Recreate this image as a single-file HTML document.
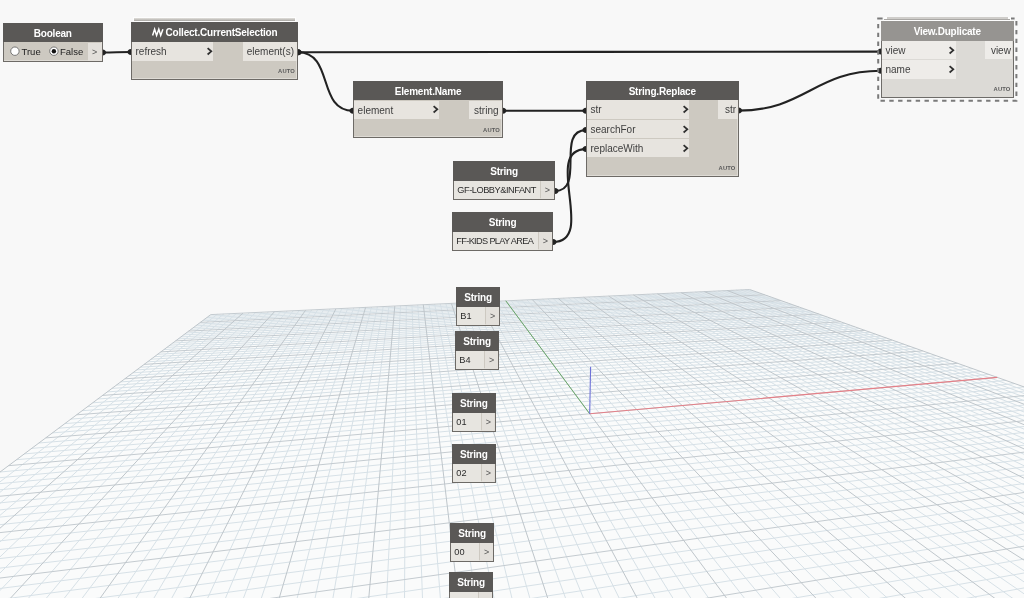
<!DOCTYPE html>
<html><head><meta charset="utf-8">
<style>
html,body{margin:0;padding:0;}
body{width:1024px;height:598px;overflow:hidden;position:relative;background:#f8f8f8;font-family:"Liberation Sans",sans-serif;}
.grid,.wires{position:absolute;left:0;top:0;}
.node{position:absolute;will-change:transform;background:#cdc9c1;box-shadow:inset 0 0 0 1px #6d6a66,inset -2px -2px 0 0 #dedbd5;}
.hd{position:absolute;left:0;right:0;top:0;padding-top:0.6px;box-sizing:border-box;background:#5a5856;color:#fff;font-weight:bold;font-size:10px;letter-spacing:-0.2px;text-align:center;white-space:nowrap;}
.row{position:absolute;background:#e7e4df;font-size:10px;color:#3e3e3e;white-space:nowrap;}
.lbl{position:absolute;top:1px;}
.chev{position:absolute;}
.auto{position:absolute;font-size:5.8px;font-weight:bold;color:#5a5a5a;letter-spacing:0.15px;margin-top:1px;margin-right:-1px;}
.sel .hd{background:#969491;}
.sel{background:#dcdad6;}
.sel .row{background:#eeece9;}
.bar{position:absolute;background:#b9b6b0;}
.tb{position:absolute;background:#e7e5e0;font-size:9.2px;color:#2b2b2b;white-space:nowrap;}
.btn{position:absolute;background:#e3e0db;font-size:9px;color:#555;text-align:center;}
</style></head><body>
<svg class="grid" width="1024" height="598" viewBox="0 0 1024 598">
<path d="M210.8 314.6L212.4 314.5L214.0 314.4L215.7 314.3L217.3 314.3L218.9 314.2L220.5 314.1L222.2 314.0L223.8 314.0L225.4 313.9L227.0 313.8L228.6 313.7L230.3 313.7L231.9 313.6L233.5 313.5L235.1 313.4L236.7 313.4L238.3 313.3L239.9 313.2L241.5 313.1L243.1 313.1L244.7 313.0L246.3 312.9L247.9 312.8L249.5 312.8L251.1 312.7L252.7 312.6L254.3 312.5L255.9 312.5L257.4 312.4L259.0 312.3L260.6 312.3L262.2 312.2L263.8 312.1L265.4 312.0L266.9 312.0L268.5 311.9L270.1 311.8L271.6 311.7L273.2 311.7L274.8 311.6L276.4 311.5L277.9 311.4L279.5 311.4L281.0 311.3L282.6 311.2L284.2 311.2L285.7 311.1L287.3 311.0L288.8 310.9L290.4 310.9L291.9 310.8L293.5 310.7L295.0 310.7L296.6 310.6L298.1 310.5L299.7 310.4L301.2 310.4L302.7 310.3L304.3 310.2L305.8 310.2L307.3 310.1L308.9 310.0L310.4 309.9L311.9 309.9L313.5 309.8L315.0 309.7L316.5 309.7L318.0 309.6L319.6 309.5L321.1 309.4L322.6 309.4L324.1 309.3L325.6 309.2L327.2 309.2L328.7 309.1L330.2 309.0L331.7 308.9L333.2 308.9L334.7 308.8L336.2 308.7L337.7 308.7L339.2 308.6L340.7 308.5L342.2 308.5L343.7 308.4L345.2 308.3L346.7 308.2L348.2 308.2L349.7 308.1L351.2 308.0L352.7 308.0L354.2 307.9L355.6 307.8L357.1 307.8L358.6 307.7L360.1 307.6L361.6 307.6L363.1 307.5L364.5 307.4L366.0 307.4L367.5 307.3L369.0 307.2L370.4 307.1L371.9 307.1L373.4 307.0L374.8 306.9L376.3 306.9L377.8 306.8L379.2 306.7L380.7 306.7L382.1 306.6L383.6 306.5L385.1 306.5L386.5 306.4L388.0 306.3L389.4 306.3L390.9 306.2L392.3 306.1L393.8 306.1L395.2 306.0L396.7 305.9L398.1 305.9L399.5 305.8L401.0 305.7L402.4 305.7L403.9 305.6L405.3 305.5L406.7 305.5L408.2 305.4L409.6 305.3L411.0 305.3L412.5 305.2L413.9 305.1L415.3 305.1L416.7 305.0L418.2 304.9L419.6 304.9L421.0 304.8L422.4 304.7L423.8 304.7L425.3 304.6L426.7 304.5L428.1 304.5L429.5 304.4L430.9 304.3L432.3 304.3L433.7 304.2L435.1 304.1L436.5 304.1L438.0 304.0L439.4 303.9L440.8 303.9L442.2 303.8L443.6 303.7L445.0 303.7L446.3 303.6L447.7 303.5L449.1 303.5L450.5 303.4L451.9 303.4L453.3 303.3L454.7 303.2L456.1 303.2L457.5 303.1L458.9 303.0L460.2 303.0L461.6 302.9L463.0 302.8L464.4 302.8L465.8 302.7L467.1 302.6L468.5 302.6L469.9 302.5L471.3 302.5L472.6 302.4L474.0 302.3L475.4 302.3L476.7 302.2L478.1 302.1L479.5 302.1L480.8 302.0L482.2 301.9L483.5 301.9L484.9 301.8L486.3 301.8L487.6 301.7L489.0 301.6L490.3 301.6L491.7 301.5L493.0 301.4L494.4 301.4L495.7 301.3L497.1 301.3L498.4 301.2L499.8 301.1L501.1 301.1L502.5 301.0L503.8 300.9L505.1 300.9L506.5 300.8L507.8 300.8L509.1 300.7L510.5 300.6L511.8 300.6L513.1 300.5L514.5 300.4L515.8 300.4L517.1 300.3L518.5 300.3L519.8 300.2L521.1 300.1L522.4 300.1L523.8 300.0L525.1 300.0L526.4 299.9L527.7 299.8L529.0 299.8L530.3 299.7L531.7 299.6L533.0 299.6L534.3 299.5L535.6 299.5L536.9 299.4L538.2 299.3L539.5 299.3L540.8 299.2L542.1 299.2L543.4 299.1L544.7 299.0L546.0 299.0L547.3 298.9L548.6 298.9L549.9 298.8L551.2 298.7L552.5 298.7L553.8 298.6L555.1 298.6L556.4 298.5L557.7 298.4L559.0 298.4L560.3 298.3L561.6 298.3L562.8 298.2L564.1 298.1L565.4 298.1L566.7 298.0L568.0 298.0L569.3 297.9L570.5 297.8L571.8 297.8L573.1 297.7L574.4 297.7L575.6 297.6L576.9 297.5L578.2 297.5L579.4 297.4L580.7 297.4L582.0 297.3L583.2 297.2L584.5 297.2L585.8 297.1L587.0 297.1L588.3 297.0L589.6 297.0L590.8 296.9L592.1 296.8L593.3 296.8L594.6 296.7L595.8 296.7L597.1 296.6L598.4 296.5L599.6 296.5L600.9 296.4L602.1 296.4L603.4 296.3L604.6 296.3L605.8 296.2L607.1 296.1L608.3 296.1L609.6 296.0L610.8 296.0L612.1 295.9L613.3 295.8L614.5 295.8L615.8 295.7L617.0 295.7L618.2 295.6L619.5 295.6L620.7 295.5L621.9 295.4L623.2 295.4L624.4 295.3L625.6 295.3L626.8 295.2L628.1 295.2L629.3 295.1L630.5 295.0L631.7 295.0L633.0 294.9L634.2 294.9L635.4 294.8L636.6 294.8L637.8 294.7L639.0 294.6L640.3 294.6L641.5 294.5L642.7 294.5L643.9 294.4L645.1 294.4L646.3 294.3L647.5 294.3L648.7 294.2L649.9 294.1L651.1 294.1L652.3 294.0L653.5 294.0L654.7 293.9L655.9 293.9L657.1 293.8L658.3 293.8L659.5 293.7L660.7 293.6L661.9 293.6L663.1 293.5L664.3 293.5L665.5 293.4L666.7 293.4L667.9 293.3L669.1 293.3L670.3 293.2L671.4 293.1L672.6 293.1L673.8 293.0L675.0 293.0L676.2 292.9L677.4 292.9L678.5 292.8L679.7 292.8L680.9 292.7L682.1 292.6L683.2 292.6L684.4 292.5L685.6 292.5L686.8 292.4L687.9 292.4L689.1 292.3L690.3 292.3L691.4 292.2L692.6 292.2L693.8 292.1L694.9 292.0L696.1 292.0L697.3 291.9L698.4 291.9L699.6 291.8L700.8 291.8L701.9 291.7L703.1 291.7L704.2 291.6L705.4 291.6L706.5 291.5L707.7 291.5L708.8 291.4L710.0 291.3L711.1 291.3L712.3 291.2L713.4 291.2L714.6 291.1L715.7 291.1L716.9 291.0L718.0 291.0L719.2 290.9L720.3 290.9L721.5 290.8L722.6 290.8L723.7 290.7L724.9 290.7L726.0 290.6L727.2 290.5L728.3 290.5L729.4 290.4L730.6 290.4L731.7 290.3L732.8 290.3L734.0 290.2L735.1 290.2L736.2 290.1L737.3 290.1L738.5 290.0L739.6 290.0L740.7 289.9L741.8 289.9L743.0 289.8L744.1 289.8L745.2 289.7L746.3 289.7L747.4 289.6L748.6 289.6L749.7 289.5L749.7 289.5L750.4 289.8L751.1 290.0L751.9 290.3L752.6 290.5L753.3 290.8L754.1 291.1L754.8 291.3L755.5 291.6L756.3 291.8L757.0 292.1L757.8 292.4L758.5 292.6L759.3 292.9L760.1 293.2L760.8 293.5L761.6 293.7L762.4 294.0L763.2 294.3L763.9 294.6L764.7 294.8L765.5 295.1L766.3 295.4L767.1 295.7L767.9 296.0L768.7 296.2L769.5 296.5L770.3 296.8L771.1 297.1L771.9 297.4L772.7 297.7L773.6 298.0L774.4 298.3L775.2 298.6L776.1 298.9L776.9 299.2L777.7 299.5L778.6 299.8L779.4 300.1L780.3 300.4L781.1 300.7L782.0 301.0L782.9 301.3L783.7 301.6L784.6 301.9L785.5 302.2L786.4 302.5L787.2 302.8L788.1 303.2L789.0 303.5L789.9 303.8L790.8 304.1L791.7 304.4L792.6 304.8L793.6 305.1L794.5 305.4L795.4 305.7L796.3 306.1L797.3 306.4L798.2 306.7L799.1 307.1L800.1 307.4L801.0 307.7L802.0 308.1L802.9 308.4L803.9 308.8L804.9 309.1L805.9 309.4L806.8 309.8L807.8 310.1L808.8 310.5L809.8 310.8L810.8 311.2L811.8 311.6L812.8 311.9L813.8 312.3L814.8 312.6L815.9 313.0L816.9 313.4L817.9 313.7L819.0 314.1L820.0 314.5L821.0 314.8L822.1 315.2L823.2 315.6L824.2 316.0L825.3 316.3L826.4 316.7L827.5 317.1L828.5 317.5L829.6 317.9L830.7 318.3L831.8 318.7L833.0 319.1L834.1 319.5L835.2 319.9L836.3 320.3L837.5 320.7L838.6 321.1L839.7 321.5L840.9 321.9L842.0 322.3L843.2 322.7L844.4 323.1L845.6 323.5L846.7 324.0L847.9 324.4L849.1 324.8L850.3 325.2L851.5 325.7L852.8 326.1L854.0 326.5L855.2 327.0L856.4 327.4L857.7 327.8L858.9 328.3L860.2 328.7L861.5 329.2L862.7 329.6L864.0 330.1L865.3 330.5L866.6 331.0L867.9 331.5L869.2 331.9L870.5 332.4L871.8 332.9L873.1 333.3L874.5 333.8L875.8 334.3L877.2 334.8L878.5 335.2L879.9 335.7L881.3 336.2L882.7 336.7L884.1 337.2L885.5 337.7L886.9 338.2L888.3 338.7L889.7 339.2L891.1 339.7L892.6 340.2L894.0 340.7L895.5 341.3L897.0 341.8L898.4 342.3L899.9 342.8L901.4 343.4L902.9 343.9L904.4 344.4L906.0 345.0L907.5 345.5L909.0 346.1L910.6 346.6L912.2 347.2L913.7 347.7L915.3 348.3L916.9 348.9L918.5 349.4L920.1 350.0L921.7 350.6L923.4 351.2L925.0 351.7L926.6 352.3L928.3 352.9L930.0 353.5L931.7 354.1L933.4 354.7L935.1 355.3L936.8 355.9L938.5 356.5L940.2 357.2L942.0 357.8L943.8 358.4L945.5 359.0L947.3 359.7L949.1 360.3L950.9 360.9L952.7 361.6L954.6 362.2L956.4 362.9L958.3 363.6L960.2 364.2L962.0 364.9L963.9 365.6L965.8 366.2L967.8 366.9L969.7 367.6L971.7 368.3L973.6 369.0L975.6 369.7L977.6 370.4L979.6 371.1L981.6 371.8L983.6 372.6L985.7 373.3L987.7 374.0L989.8 374.7L991.9 375.5L994.0 376.2L996.1 377.0L998.3 377.8L1000.4 378.5L1002.6 379.3L1004.8 380.1L1007.0 380.8L1009.2 381.6L1011.4 382.4L1013.7 383.2L1016.0 384.0L1018.2 384.8L1020.5 385.7L1022.9 386.5L1025.2 387.3L1027.6 388.1L1029.9 389.0L1032.3 389.8L1034.7 390.7L1037.1 391.5L1039.6 392.4L1042.1 393.3L1044.5 394.2L1047.0 395.1L1049.6 396.0L1052.1 396.9L1054.7 397.8L1057.3 398.7L1059.9 399.6L1062.5 400.5L1065.1 401.5L1067.8 402.4L1070.5 403.4L1073.2 404.3L1074.0 405.3L1074.0 406.3L1074.0 407.3L1074.0 408.3L1074.0 409.3L1074.0 410.3L1074.0 411.3L1074.0 412.3L1074.0 413.4L1074.0 414.4L1074.0 415.5L1074.0 416.5L1074.0 417.6L1074.0 418.7L1074.0 419.8L1074.0 420.9L1074.0 422.0L1074.0 423.1L1074.0 424.3L1074.0 425.4L1074.0 426.6L1074.0 427.7L1074.0 428.9L1074.0 430.1L1074.0 431.3L1074.0 432.5L1074.0 433.7L1074.0 434.9L1074.0 436.2L1074.0 437.4L1074.0 438.7L1074.0 439.9L1074.0 441.2L1074.0 442.5L1074.0 443.8L1074.0 445.2L1074.0 446.5L1074.0 447.8L1074.0 449.2L1074.0 450.6L1074.0 452.0L1074.0 453.4L1074.0 454.8L1074.0 456.2L1074.0 457.7L1074.0 459.1L1074.0 460.6L1074.0 462.1L1074.0 463.6L1074.0 465.1L1074.0 466.6L1074.0 468.2L1074.0 469.8L1074.0 471.3L1074.0 472.9L1074.0 474.6L1074.0 476.2L1074.0 477.8L1074.0 479.5L1074.0 481.2L1074.0 482.9L1074.0 484.6L1074.0 486.4L1074.0 488.1L1074.0 489.9L1074.0 491.7L1074.0 493.5L1074.0 495.4L1074.0 497.3L1074.0 499.1L1074.0 501.1L1074.0 503.0L1074.0 504.9L1074.0 506.9L1074.0 508.9L1074.0 510.9L1074.0 513.0L1074.0 515.0L1074.0 517.1L1074.0 519.3L1074.0 521.4L1074.0 523.6L1074.0 525.8L1074.0 528.0L1074.0 530.3L1074.0 532.6L1074.0 534.9L1074.0 537.2L1074.0 539.6L1074.0 542.0L1074.0 544.4L1074.0 546.9L1074.0 549.4L1074.0 551.9L1074.0 554.5L1074.0 557.1L1074.0 559.7L1074.0 562.4L1074.0 565.1L1074.0 567.9L1074.0 570.6L1074.0 573.5L1074.0 576.3L1074.0 579.2L1074.0 582.2L1074.0 585.2L1074.0 588.2L1074.0 591.3L1074.0 594.4L1074.0 597.6L1074.0 600.8L1074.0 604.1L1074.0 607.4L1074.0 610.7L1074.0 614.2L1074.0 617.6L1074.0 621.1L1074.0 624.7L1074.0 628.4L1074.0 632.1L1074.0 635.8L1074.0 639.6L1074.0 643.5L1074.0 647.4L1074.0 648.0L1074.0 648.0L1074.0 648.0L1074.0 648.0L1074.0 648.0L1074.0 648.0L1074.0 648.0L1074.0 648.0L1074.0 648.0L1074.0 648.0L1074.0 648.0L1074.0 648.0L1074.0 648.0L1074.0 648.0L1074.0 648.0L1074.0 648.0L1074.0 648.0L1074.0 648.0L1074.0 648.0L1074.0 648.0L1074.0 648.0L1074.0 648.0L1074.0 648.0L1074.0 648.0L1074.0 648.0L1074.0 648.0L1074.0 648.0L1074.0 648.0L1074.0 648.0L1074.0 648.0L1074.0 648.0L1074.0 648.0L1074.0 648.0L1074.0 648.0L1074.0 648.0L1074.0 648.0L1074.0 648.0L1074.0 648.0L1074.0 648.0L1074.0 648.0L1074.0 648.0L1074.0 648.0L1074.0 648.0L1074.0 648.0L1074.0 648.0L1074.0 648.0L1074.0 648.0L1074.0 648.0L1074.0 648.0L1074.0 648.0L1074.0 648.0L1074.0 648.0L1074.0 648.0L1074.0 648.0L1074.0 648.0L1074.0 648.0L1074.0 648.0L1074.0 648.0L1074.0 648.0L1074.0 648.0L1074.0 648.0L1074.0 648.0L1074.0 648.0L1074.0 648.0L1074.0 648.0L1074.0 648.0L1074.0 648.0L1074.0 648.0L1074.0 648.0L1074.0 648.0L1074.0 648.0L1074.0 648.0L1074.0 648.0L1074.0 648.0L1074.0 648.0L1074.0 648.0L1074.0 648.0L1074.0 648.0L1074.0 648.0L1074.0 648.0L1074.0 648.0L1074.0 648.0L1074.0 648.0L1074.0 648.0L1074.0 648.0L1074.0 648.0L1074.0 648.0L1074.0 648.0L1074.0 648.0L1074.0 648.0L1074.0 648.0L1074.0 648.0L1074.0 648.0L1074.0 648.0L1074.0 648.0L1074.0 648.0L1074.0 648.0L1074.0 648.0L1074.0 648.0L1074.0 648.0L1074.0 648.0L1074.0 648.0L1074.0 648.0L1074.0 648.0L1074.0 648.0L1074.0 648.0L1074.0 648.0L1074.0 648.0L1074.0 648.0L1074.0 648.0L1074.0 648.0L1074.0 648.0L1074.0 648.0L1074.0 648.0L1074.0 648.0L1074.0 648.0L1074.0 648.0L1074.0 648.0L1074.0 648.0L1074.0 648.0L1074.0 648.0L1074.0 648.0L1074.0 648.0L1074.0 648.0L1074.0 648.0L1074.0 648.0L1074.0 648.0L1074.0 648.0L1074.0 648.0L1074.0 648.0L1074.0 648.0L1074.0 648.0L1074.0 648.0L1074.0 648.0L1074.0 648.0L1074.0 648.0L1074.0 648.0L1074.0 648.0L1074.0 648.0L1074.0 648.0L1074.0 648.0L1074.0 648.0L1074.0 648.0L1074.0 648.0L1074.0 648.0L1074.0 648.0L1074.0 648.0L1074.0 648.0L1074.0 648.0L1074.0 648.0L1074.0 648.0L1074.0 648.0L1074.0 648.0L1074.0 648.0L1074.0 648.0L1074.0 648.0L1074.0 648.0L1074.0 648.0L1074.0 648.0L1074.0 648.0L1074.0 648.0L1074.0 648.0L1074.0 648.0L1074.0 648.0L1074.0 648.0L1074.0 648.0L1074.0 648.0L1074.0 648.0L1074.0 648.0L1074.0 648.0L1074.0 648.0L1074.0 648.0L1074.0 648.0L1074.0 648.0L1074.0 648.0L1074.0 648.0L1074.0 648.0L1074.0 648.0L1074.0 648.0L1074.0 648.0L1074.0 648.0L1074.0 648.0L1074.0 648.0L1074.0 648.0L1074.0 648.0L1074.0 648.0L1074.0 648.0L1074.0 648.0L1074.0 648.0L1074.0 648.0L1074.0 648.0L1074.0 648.0L1074.0 648.0L1074.0 648.0L1074.0 648.0L1074.0 648.0L1074.0 648.0L1074.0 648.0L1074.0 648.0L1074.0 648.0L1074.0 648.0L1074.0 648.0L1074.0 648.0L1074.0 648.0L1074.0 648.0L1074.0 648.0L1074.0 648.0L1074.0 648.0L1074.0 648.0L1074.0 648.0L1074.0 648.0L1074.0 648.0L1074.0 648.0L1074.0 648.0L1074.0 648.0L1074.0 648.0L1074.0 648.0L1074.0 648.0L1074.0 648.0L1074.0 648.0L1074.0 648.0L1074.0 648.0L1074.0 648.0L1074.0 648.0L1074.0 648.0L1074.0 648.0L1074.0 648.0L1074.0 648.0L1074.0 648.0L1074.0 648.0L1074.0 648.0L1074.0 648.0L1074.0 648.0L1074.0 648.0L1074.0 648.0L1074.0 648.0L1074.0 648.0L1074.0 648.0L1074.0 648.0L1074.0 648.0L1074.0 648.0L1074.0 648.0L1074.0 648.0L1074.0 648.0L1074.0 648.0L1074.0 648.0L1074.0 648.0L1074.0 648.0L1074.0 648.0L1074.0 648.0L1074.0 648.0L1074.0 648.0L1074.0 648.0L1074.0 648.0L1074.0 648.0L1074.0 648.0L1074.0 648.0L1074.0 648.0L1074.0 648.0L1074.0 648.0L1074.0 648.0L1074.0 648.0L1074.0 648.0L1074.0 648.0L1074.0 648.0L1074.0 648.0L1074.0 648.0L1074.0 648.0L1074.0 648.0L1074.0 648.0L1074.0 648.0L1074.0 648.0L1074.0 648.0L1074.0 648.0L1074.0 648.0L1074.0 648.0L1074.0 648.0L1074.0 648.0L1074.0 648.0L1074.0 648.0L1074.0 648.0L1074.0 648.0L1074.0 648.0L1074.0 648.0L1074.0 648.0L1074.0 648.0L1057.8 648.0L1040.1 648.0L1022.1 648.0L1003.9 648.0L985.3 648.0L966.4 648.0L947.3 648.0L927.8 648.0L907.9 648.0L887.8 648.0L867.3 648.0L846.5 648.0L825.3 648.0L803.7 648.0L781.8 648.0L759.5 648.0L736.8 648.0L713.7 648.0L690.1 648.0L666.1 648.0L641.7 648.0L616.9 648.0L591.5 648.0L565.7 648.0L539.4 648.0L512.6 648.0L485.3 648.0L457.4 648.0L429.0 648.0L400.0 648.0L370.4 648.0L340.2 648.0L309.4 648.0L278.0 648.0L245.8 648.0L213.0 648.0L179.5 648.0L145.3 648.0L110.3 648.0L74.5 648.0L37.9 648.0L0.5 648.0L-37.8 648.0L-50.0 648.0L-50.0 648.0L-50.0 648.0L-50.0 648.0L-50.0 648.0L-50.0 648.0L-50.0 648.0L-50.0 648.0L-50.0 648.0L-50.0 648.0L-50.0 648.0L-50.0 648.0L-50.0 648.0L-50.0 648.0L-50.0 648.0L-50.0 648.0L-50.0 648.0L-50.0 648.0L-50.0 648.0L-50.0 648.0L-50.0 648.0L-50.0 648.0L-50.0 648.0L-50.0 648.0L-50.0 648.0L-50.0 648.0L-50.0 648.0L-50.0 648.0L-50.0 648.0L-50.0 648.0L-50.0 648.0L-50.0 648.0L-50.0 648.0L-50.0 648.0L-50.0 648.0L-50.0 648.0L-50.0 648.0L-50.0 648.0L-50.0 648.0L-50.0 648.0L-50.0 648.0L-50.0 648.0L-50.0 648.0L-50.0 648.0L-50.0 648.0L-50.0 648.0L-50.0 648.0L-50.0 648.0L-50.0 648.0L-50.0 648.0L-50.0 648.0L-50.0 648.0L-50.0 648.0L-50.0 648.0L-50.0 648.0L-50.0 648.0L-50.0 648.0L-50.0 648.0L-50.0 648.0L-50.0 648.0L-50.0 648.0L-50.0 648.0L-50.0 648.0L-50.0 648.0L-50.0 648.0L-50.0 648.0L-50.0 648.0L-50.0 648.0L-50.0 648.0L-50.0 648.0L-50.0 648.0L-50.0 648.0L-50.0 648.0L-50.0 648.0L-50.0 648.0L-50.0 648.0L-50.0 648.0L-50.0 648.0L-50.0 648.0L-50.0 648.0L-50.0 648.0L-50.0 648.0L-50.0 648.0L-50.0 648.0L-50.0 648.0L-50.0 648.0L-50.0 648.0L-50.0 648.0L-50.0 648.0L-50.0 648.0L-50.0 648.0L-50.0 648.0L-50.0 648.0L-50.0 648.0L-50.0 648.0L-50.0 648.0L-50.0 648.0L-50.0 648.0L-50.0 648.0L-50.0 648.0L-50.0 648.0L-50.0 648.0L-50.0 648.0L-50.0 648.0L-50.0 648.0L-50.0 648.0L-50.0 648.0L-50.0 648.0L-50.0 648.0L-50.0 648.0L-50.0 648.0L-50.0 648.0L-50.0 648.0L-50.0 648.0L-50.0 648.0L-50.0 648.0L-50.0 648.0L-50.0 648.0L-50.0 648.0L-50.0 648.0L-50.0 648.0L-50.0 648.0L-50.0 648.0L-50.0 648.0L-50.0 648.0L-50.0 648.0L-50.0 648.0L-50.0 648.0L-50.0 648.0L-50.0 648.0L-50.0 648.0L-50.0 648.0L-50.0 648.0L-50.0 648.0L-50.0 648.0L-50.0 648.0L-50.0 648.0L-50.0 648.0L-50.0 648.0L-50.0 648.0L-50.0 648.0L-50.0 648.0L-50.0 648.0L-50.0 648.0L-50.0 648.0L-50.0 648.0L-50.0 648.0L-50.0 648.0L-50.0 648.0L-50.0 648.0L-50.0 648.0L-50.0 648.0L-50.0 648.0L-50.0 648.0L-50.0 648.0L-50.0 648.0L-50.0 648.0L-50.0 648.0L-50.0 648.0L-50.0 648.0L-50.0 648.0L-50.0 648.0L-50.0 648.0L-50.0 648.0L-50.0 648.0L-50.0 648.0L-50.0 648.0L-50.0 648.0L-50.0 648.0L-50.0 648.0L-50.0 648.0L-50.0 648.0L-50.0 648.0L-50.0 648.0L-50.0 648.0L-50.0 648.0L-50.0 648.0L-50.0 648.0L-50.0 647.9L-50.0 643.9L-50.0 640.0L-50.0 636.2L-50.0 632.4L-50.0 628.7L-50.0 625.1L-50.0 621.5L-50.0 617.9L-50.0 614.4L-50.0 611.0L-50.0 607.6L-50.0 604.3L-50.0 601.0L-50.0 597.8L-50.0 594.6L-50.0 591.5L-50.0 588.4L-50.0 585.3L-50.0 582.3L-50.0 579.4L-50.0 576.5L-50.0 573.6L-50.0 570.8L-50.0 568.0L-50.0 565.2L-50.0 562.5L-50.0 559.8L-50.0 557.2L-50.0 554.6L-50.0 552.0L-50.0 549.4L-50.0 546.9L-50.0 544.5L-50.0 542.0L-50.0 539.6L-50.0 537.2L-50.0 534.9L-50.0 532.5L-50.0 530.3L-50.0 528.0L-50.0 525.8L-50.0 523.6L-50.0 521.4L-50.0 519.2L-50.0 517.1L-50.0 515.0L-50.0 512.9L-50.0 510.9L-49.2 508.8L-46.5 506.8L-43.9 504.8L-41.3 502.9L-38.7 501.0L-36.1 499.0L-33.6 497.2L-31.1 495.3L-28.6 493.4L-26.2 491.6L-23.7 489.8L-21.3 488.0L-19.0 486.2L-16.6 484.5L-14.3 482.8L-12.0 481.1L-9.8 479.4L-7.5 477.7L-5.3 476.0L-3.1 474.4L-1.0 472.8L1.2 471.2L3.3 469.6L5.4 468.0L7.5 466.5L9.6 464.9L11.6 463.4L13.6 461.9L15.6 460.4L17.6 458.9L19.5 457.5L21.5 456.0L23.4 454.6L25.3 453.2L27.2 451.8L29.0 450.4L30.9 449.0L32.7 447.6L34.5 446.3L36.3 445.0L38.1 443.6L39.8 442.3L41.6 441.0L43.3 439.7L45.0 438.5L46.7 437.2L48.4 435.9L50.0 434.7L51.7 433.5L53.3 432.2L54.9 431.0L56.5 429.8L58.1 428.7L59.7 427.5L61.2 426.3L62.8 425.2L64.3 424.0L65.8 422.9L67.3 421.8L68.8 420.7L70.3 419.6L71.7 418.5L73.2 417.4L74.6 416.3L76.1 415.2L77.5 414.2L78.9 413.1L80.3 412.1L81.6 411.1L83.0 410.0L84.4 409.0L85.7 408.0L87.0 407.0L88.4 406.0L89.7 405.1L91.0 404.1L92.3 403.1L93.5 402.2L94.8 401.2L96.1 400.3L97.3 399.4L98.5 398.4L99.8 397.5L101.0 396.6L102.2 395.7L103.4 394.8L104.6 393.9L105.8 393.0L106.9 392.2L108.1 391.3L109.3 390.4L110.4 389.6L111.5 388.7L112.7 387.9L113.8 387.0L114.9 386.2L116.0 385.4L117.1 384.6L118.2 383.8L119.3 383.0L120.3 382.2L121.4 381.4L122.4 380.6L123.5 379.8L124.5 379.0L125.6 378.2L126.6 377.5L127.6 376.7L128.6 376.0L129.6 375.2L130.6 374.5L131.6 373.7L132.6 373.0L133.5 372.3L134.5 371.6L135.5 370.8L136.4 370.1L137.4 369.4L138.3 368.7L139.2 368.0L140.2 367.3L141.1 366.6L142.0 366.0L142.9 365.3L143.8 364.6L144.7 363.9L145.6 363.3L146.5 362.6L147.3 362.0L148.2 361.3L149.1 360.7L149.9 360.0L150.8 359.4L151.6 358.8L152.5 358.1L153.3 357.5L154.2 356.9L155.0 356.3L155.8 355.6L156.6 355.0L157.4 354.4L158.2 353.8L159.0 353.2L159.8 352.6L160.6 352.0L161.4 351.5L162.2 350.9L163.0 350.3L163.7 349.7L164.5 349.2L165.3 348.6L166.0 348.0L166.8 347.5L167.5 346.9L168.2 346.3L169.0 345.8L169.7 345.3L170.4 344.7L171.2 344.2L171.9 343.6L172.6 343.1L173.3 342.6L174.0 342.0L174.7 341.5L175.4 341.0L176.1 340.5L176.8 340.0L177.5 339.4L178.2 338.9L178.8 338.4L179.5 337.9L180.2 337.4L180.8 336.9L181.5 336.4L182.2 335.9L182.8 335.5L183.5 335.0L184.1 334.5L184.8 334.0L185.4 333.5L186.0 333.1L186.7 332.6L187.3 332.1L187.9 331.7L188.5 331.2L189.2 330.7L189.8 330.3L190.4 329.8L191.0 329.4L191.6 328.9L192.2 328.5L192.8 328.0L193.4 327.6L194.0 327.1L194.6 326.7L195.1 326.3L195.7 325.8L196.3 325.4L196.9 325.0L197.4 324.5L198.0 324.1L198.6 323.7L199.1 323.3L199.7 322.9L200.2 322.4L200.8 322.0L201.4 321.6L201.9 321.2L202.4 320.8L203.0 320.4L203.5 320.0L204.1 319.6L204.6 319.2L205.1 318.8L205.6 318.4L206.2 318.0L206.7 317.6L207.2 317.2L207.7 316.8L208.2 316.5L208.8 316.1L209.3 315.7L209.8 315.3L210.3 314.9L210.8 314.6Z" fill="#fafbfb"/>
<path d="M-20.0 497.3L217.3 314.3M-20.0 508.2L223.8 314.0M-20.0 519.9L230.2 313.7M-20.0 532.4L236.6 313.4M-20.0 560.3L249.4 312.8M-20.0 576.0L255.7 312.5M-20.0 592.9L262.1 312.2M-20.0 611.2L268.4 311.9M11.0 618.0L280.9 311.3M29.7 618.0L287.1 311.0M48.5 618.0L293.3 310.7M67.2 618.0L299.4 310.4M104.7 618.0L311.7 309.9M123.5 618.0L317.8 309.6M142.2 618.0L323.9 309.3M160.9 618.0L329.9 309.0M198.4 618.0L341.9 308.5M949.6 618.0L1044.0 600.1M217.1 618.0L347.9 308.2M858.7 618.0L1044.0 584.3M235.9 618.0L353.8 307.9M767.8 618.0L1044.0 569.5M254.6 618.0L359.7 307.6M676.9 618.0L1044.0 555.7M292.1 618.0L371.5 307.1M495.0 618.0L1044.0 530.9M310.8 618.0L377.4 306.8M404.0 618.0L1044.0 519.6M329.5 618.0L383.2 306.6M313.0 618.0L1044.0 509.0M348.3 618.0L389.0 306.3M221.9 618.0L1044.0 499.1M385.7 618.0L400.5 305.7M39.7 618.0L1044.0 480.8M404.4 618.0L406.3 305.5M-20.0 613.8L1044.0 472.4M423.2 618.0L412.0 305.2M-20.0 602.1L1044.0 464.4M441.9 618.0L417.7 304.9M-20.0 591.0L1044.0 456.9M479.3 618.0L429.0 304.4M-20.0 570.5L1044.0 442.8M498.0 618.0L434.6 304.2M-20.0 560.9L1044.0 436.3M516.8 618.0L440.2 303.9M-20.0 551.8L1044.0 430.1M535.5 618.0L445.8 303.6M-20.0 543.1L1044.0 424.2M572.9 618.0L456.9 303.1M-20.0 526.8L1044.0 413.1M591.6 618.0L462.4 302.9M-20.0 519.2L1044.0 407.9M610.3 618.0L467.9 302.6M-20.0 511.9L1044.0 403.0M629.0 618.0L473.4 302.4M-20.0 504.9L1044.0 398.2M666.5 618.0L484.3 301.8M-20.0 491.7L1033.4 390.2M685.2 618.0L489.7 301.6M-17.7 485.3L1024.0 386.9M703.9 618.0L495.1 301.3M-8.6 478.5L1014.8 383.6M722.6 618.0L500.5 301.1M0.1 472.0L1005.9 380.4M760.0 618.0L511.1 300.6M16.6 459.7L988.8 374.4M778.7 618.0L516.4 300.4M24.3 453.9L980.6 371.5M797.4 618.0L521.7 300.1M31.7 448.4L972.7 368.7M816.1 618.0L527.0 299.9M38.9 443.0L965.0 365.9M853.5 618.0L537.5 299.4M52.4 432.9L950.1 360.7M872.2 618.0L542.7 299.1M58.8 428.2L943.0 358.1M890.9 618.0L547.9 298.9M64.9 423.6L936.1 355.7M909.6 618.0L553.1 298.6M70.9 419.1L929.3 353.3M947.0 618.0L563.3 298.2M82.2 410.7L916.3 348.6M965.7 618.0L568.5 297.9M87.5 406.7L910.0 346.4M984.3 618.0L573.6 297.7M92.7 402.8L903.9 344.2M1003.0 618.0L578.6 297.5M97.8 399.0L897.9 342.1M1040.4 618.0L588.7 297.0M107.3 391.9L886.4 338.0M1044.0 607.6L593.8 296.8M111.9 388.4L880.8 336.1M1044.0 595.3L598.8 296.5M116.4 385.1L875.4 334.1M1044.0 583.7L603.7 296.3M120.7 381.9L870.1 332.2M1044.0 562.4L613.7 295.8M128.9 375.8L859.8 328.6M1044.0 552.5L618.6 295.6M132.8 372.8L854.9 326.8M1044.0 543.1L623.5 295.4M136.7 369.9L850.0 325.1M1044.0 534.1L628.4 295.1M140.4 367.2L845.3 323.4M1044.0 517.5L638.1 294.7M147.6 361.8L836.0 320.2M1044.0 509.7L643.0 294.5M151.0 359.2L831.6 318.6M1044.0 502.2L647.8 294.2M154.3 356.7L827.2 317.0M1044.0 495.1L652.6 294.0M157.6 354.3L822.9 315.5M1044.0 481.7L662.2 293.6M163.9 349.6L814.6 312.6M1044.0 475.4L666.9 293.4M166.9 347.4L810.6 311.1M1044.0 469.4L671.6 293.1M169.8 345.2L806.7 309.7M1044.0 463.6L676.4 292.9M172.7 343.0L802.8 308.4M1044.0 452.6L685.8 292.5M178.3 338.9L795.3 305.7M1044.0 447.4L690.4 292.3M180.9 336.9L791.6 304.4M1044.0 442.5L695.1 292.0M183.5 334.9L788.0 303.1M1044.0 437.6L699.7 291.8M186.1 333.0L784.5 301.9M1044.0 428.5L709.0 291.4M191.0 329.3L777.7 299.4M1044.0 424.1L713.5 291.2M193.4 327.5L774.3 298.3M1044.0 419.9L718.1 291.0M195.8 325.8L771.1 297.1M1044.0 415.9L722.7 290.8M198.0 324.1L767.8 295.9M1044.0 408.1L731.7 290.3M202.5 320.8L761.6 293.7M1044.0 404.4L736.2 290.1M204.6 319.2L758.5 292.6M1044.0 400.8L740.7 289.9M206.7 317.6L755.5 291.6M1044.0 397.4L745.2 289.7M208.8 316.1L752.6 290.5" stroke="#d7e1e7" stroke-width="1" fill="none"/>
<path d="M1040.4 618.0L1044.0 617.3M586.0 618.0L1044.0 542.9M130.8 618.0L1044.0 489.7M-20.0 580.5L1044.0 449.7M-20.0 534.8L1044.0 418.5M-20.0 498.2L1043.2 393.7M8.5 465.7L997.2 377.4M45.8 437.9L957.4 363.3M76.6 414.8L922.7 350.9M102.6 395.4L892.1 340.1M124.8 378.8L864.9 330.4M144.0 364.4L840.6 321.8M160.8 351.9L818.7 314.0M175.5 340.9L799.0 307.0M188.6 331.1L781.1 300.6M200.3 322.4L764.7 294.8M210.8 314.6L749.7 289.5" stroke="#c4cbd0" stroke-width="1" fill="none"/>
<path d="M-20.0 487.0L210.8 314.6M-20.0 545.9L243.0 313.1M-7.8 618.0L274.6 311.6M86.0 618.0L305.6 310.2M179.7 618.0L335.9 308.8M273.3 618.0L365.6 307.4M367.0 618.0L394.8 306.0M460.6 618.0L423.3 304.7M554.2 618.0L451.4 303.4M647.8 618.0L478.8 302.1M741.3 618.0L505.8 300.8M834.8 618.0L532.3 299.6M928.3 618.0L558.2 298.4M1021.7 618.0L583.7 297.2M1044.0 572.8L608.7 296.1M1044.0 525.6L633.3 294.9M1044.0 488.3L657.4 293.8M1044.0 458.0L681.1 292.7M1044.0 433.0L704.3 291.6M1044.0 411.9L727.2 290.5M1044.0 394.0L749.7 289.5" stroke="#bfc6cb" stroke-width="1" fill="none"/>
<path d="M589.7 413.8L997.2 377.4" stroke="#e48088" stroke-width="1.1"/>
<path d="M589.7 413.8L505.8 300.8" stroke="#6aa86a" stroke-width="1"/>
<path d="M589.7 413.8L590.6 366.8" stroke="#6e72d8" stroke-width="1.1"/>
</svg>
<svg class="wires" width="1024" height="598" viewBox="0 0 1024 598" fill="none" stroke="#222" stroke-width="2.1">
<path d="M102.5 52.5C115.3 52.5 118.2 52 131 52"/>
<path d="M102.5 49.5C104.7 49.5 106.1 51.3 106.1 52.5C106.1 53.7 104.7 55.5 102.5 55.5Z" fill="#222" stroke="none"/>
<path d="M131 49C128.8 49 127.4 50.8 127.4 52C127.4 53.2 128.8 55 131 55Z" fill="#222" stroke="none"/>
<path d="M298 52.2C560.4 52.2 618.6 51.6 881 51.6"/>
<path d="M298 49.2C300.2 49.2 301.6 51.0 301.6 52.2C301.6 53.400000000000006 300.2 55.2 298 55.2Z" fill="#222" stroke="none"/>
<path d="M881 48.6C878.8 48.6 877.4 50.4 877.4 51.6C877.4 52.800000000000004 878.8 54.6 881 54.6Z" fill="#222" stroke="none"/>
<path d="M298 52.2C334.2 52.2 316.8 110.8 353 110.8"/>
<path d="M298 49.2C300.2 49.2 301.6 51.0 301.6 52.2C301.6 53.400000000000006 300.2 55.2 298 55.2Z" fill="#222" stroke="none"/>
<path d="M353 107.8C350.8 107.8 349.4 109.6 349.4 110.8C349.4 112.0 350.8 113.8 353 113.8Z" fill="#222" stroke="none"/>
<path d="M502.8 110.8C540.2 110.8 548.6 110.8 586 110.8"/>
<path d="M502.8 107.8C505.0 107.8 506.40000000000003 109.6 506.40000000000003 110.8C506.40000000000003 112.0 505.0 113.8 502.8 113.8Z" fill="#222" stroke="none"/>
<path d="M586 107.8C583.8 107.8 582.4 109.6 582.4 110.8C582.4 112.0 583.8 113.8 586 113.8Z" fill="#222" stroke="none"/>
<path d="M738.5 110.6C805.1 110.6 814.4 70.8 881 70.8"/>
<path d="M738.5 107.6C740.7 107.6 742.1 109.39999999999999 742.1 110.6C742.1 111.8 740.7 113.6 738.5 113.6Z" fill="#222" stroke="none"/>
<path d="M881 67.8C878.8 67.8 877.4 69.6 877.4 70.8C877.4 72.0 878.8 73.8 881 73.8Z" fill="#222" stroke="none"/>
<path d="M555 191C585.8 191 555.2 130.1 586 130.1"/>
<path d="M555 188C557.2 188 558.6 189.8 558.6 191C558.6 192.2 557.2 194 555 194Z" fill="#222" stroke="none"/>
<path d="M586 127.1C583.8 127.1 582.4 128.9 582.4 130.1C582.4 131.29999999999998 583.8 133.1 586 133.1Z" fill="#222" stroke="none"/>
<path d="M553 242C597.4 242 541.6 149.1 586 149.1"/>
<path d="M553 239C555.2 239 556.6 240.8 556.6 242C556.6 243.2 555.2 245 553 245Z" fill="#222" stroke="none"/>
<path d="M586 146.1C583.8 146.1 582.4 147.9 582.4 149.1C582.4 150.29999999999998 583.8 152.1 586 152.1Z" fill="#222" stroke="none"/>
</svg>

<!-- Boolean -->
<div class="node" style="left:3px;top:23px;width:99.5px;height:38.5px;">
  <div class="hd" style="height:19px;line-height:19px;">Boolean</div>
  <div class="row" style="left:1px;top:19.5px;width:84px;height:17.5px;background:#cdc9c1;"></div>
  <div class="btn" style="left:85px;top:19.5px;width:13.5px;height:18px;line-height:18px;">&gt;</div>
  <svg style="position:absolute;left:0;top:19px" width="86" height="19">
    <circle cx="11.9" cy="9.2" r="4.2" fill="#fff" stroke="#5a5a5a" stroke-width="0.8"/>
    <circle cx="50.9" cy="9.2" r="4.2" fill="#fff" stroke="#5a5a5a" stroke-width="0.8"/>
    <circle cx="50.9" cy="9.2" r="2.2" fill="#111"/>
  </svg>
  <div style="position:absolute;left:18.5px;top:19px;line-height:19px;font-size:9.5px;color:#222;">True</div>
  <div style="position:absolute;left:57px;top:19px;line-height:19px;font-size:9.5px;color:#222;">False</div>
</div>

<!-- Collect.CurrentSelection -->
<div class="bar" style="left:133px;top:16.8px;width:163px;height:5px;background:#fdfdfd;"></div>
<div class="bar" style="left:134px;top:17.9px;width:161px;height:2.7px;background:linear-gradient(#e2e0dc,#a8a6a2);"></div>
<div class="node" style="left:131px;top:22px;width:167px;height:57.5px;">
  <div class="hd" style="height:19.7px;line-height:19.7px;padding-left:14px;">Collect.CurrentSelection</div><svg style="position:absolute;left:0;top:0" width="40" height="20"><path d="M21.6 13.4L23.6 7.2L25.6 13.4L27.8 7.2L29.7 13.4L31.9 7.2" stroke="#fff" stroke-width="1.5" fill="none" stroke-linejoin="miter"/></svg>
  <div class="row" style="left:1px;top:20.3px;width:81.2px;height:18.3px;"><span class="lbl" style="left:3.5px;line-height:18.3px;">refresh</span><svg class="chev" style="right:0.2px;top:4.85px" width="7" height="9"><path d="M1.6 1.1L5.3 4.3L1.6 7.5" stroke="#2f2f2f" stroke-width="1.75" fill="none"/></svg></div>
  <div class="row" style="left:111.7px;top:20.3px;width:54.3px;height:18.3px;"><span class="lbl" style="right:3px;line-height:18.3px;">element(s)</span></div>
  <div class="auto" style="right:4px;top:45px;">AUTO</div>
</div>

<!-- Element.Name -->
<div class="node" style="left:353px;top:81px;width:150px;height:57px;">
  <div class="hd" style="height:19.3px;line-height:19.3px;">Element.Name</div>
  <div class="row" style="left:1px;top:19.6px;width:85.3px;height:18.2px;"><span class="lbl" style="left:3.6px;line-height:18.2px;">element</span><svg class="chev" style="right:0.2px;top:4.80px" width="7" height="9"><path d="M1.6 1.1L5.3 4.3L1.6 7.5" stroke="#2f2f2f" stroke-width="1.75" fill="none"/></svg></div>
  <div class="row" style="left:116px;top:19.6px;width:33px;height:18.2px;"><span class="lbl" style="right:3.5px;line-height:18.2px;">string</span></div>
  <div class="auto" style="right:4px;top:45px;">AUTO</div>
</div>

<!-- String.Replace -->
<div class="node" style="left:586px;top:81px;width:152.5px;height:95.5px;">
  <div class="hd" style="height:19.2px;line-height:19.2px;">String.Replace</div>
  <div class="row" style="left:1px;top:19.4px;width:102px;height:18.6px;"><span class="lbl" style="left:3.5px;line-height:18.6px;">str</span><svg class="chev" style="right:0.2px;top:5.00px" width="7" height="9"><path d="M1.6 1.1L5.3 4.3L1.6 7.5" stroke="#2f2f2f" stroke-width="1.75" fill="none"/></svg></div>
  <div class="row" style="left:1px;top:38.6px;width:102px;height:18.6px;"><span class="lbl" style="left:3.5px;line-height:18.6px;">searchFor</span><svg class="chev" style="right:0.2px;top:5.00px" width="7" height="9"><path d="M1.6 1.1L5.3 4.3L1.6 7.5" stroke="#2f2f2f" stroke-width="1.75" fill="none"/></svg></div>
  <div class="row" style="left:1px;top:57.8px;width:102px;height:18.6px;"><span class="lbl" style="left:3.5px;line-height:18.6px;">replaceWith</span><svg class="chev" style="right:0.2px;top:5.00px" width="7" height="9"><path d="M1.6 1.1L5.3 4.3L1.6 7.5" stroke="#2f2f2f" stroke-width="1.75" fill="none"/></svg></div>
  <div class="row" style="left:132px;top:19.4px;width:19.5px;height:18.5px;"><span class="lbl" style="right:1.5px;line-height:18.5px;">str</span></div>
  <div class="auto" style="right:4px;top:83px;">AUTO</div>
</div>

<!-- View.Duplicate (selected) -->
<svg style="position:absolute;left:0;top:0" width="1024" height="120"><path d="M878.2 18.5H1016.4V100.8H878.2Z" fill="none" stroke="#7a7a7a" stroke-width="2" stroke-dasharray="4.4 4.4"/></svg>
<div class="bar" style="left:884px;top:16.5px;width:127px;height:4.5px;background:#fdfdfd;"></div>
<div class="bar" style="left:887px;top:17px;width:121px;height:2px;background:#cfcdca;"></div>
<div class="bar" style="left:884px;top:19px;width:126px;height:1px;background:#aaa8a5;"></div>
<div class="node sel" style="left:881px;top:21px;width:132.5px;height:76.5px;box-shadow:inset 0 0 0 1px #6e6c69;">
  <div class="hd" style="height:19.5px;line-height:19.5px;">View.Duplicate</div>
  <div class="row" style="left:1px;top:19.8px;width:73.5px;height:18.5px;"><span class="lbl" style="left:3.5px;line-height:18.5px;">view</span><svg class="chev" style="right:0.2px;top:4.95px" width="7" height="9"><path d="M1.6 1.1L5.3 4.3L1.6 7.5" stroke="#2f2f2f" stroke-width="1.75" fill="none"/></svg></div>
  <div class="row" style="left:1px;top:39px;width:73.5px;height:18.5px;"><span class="lbl" style="left:3.5px;line-height:18.5px;">name</span><svg class="chev" style="right:0.2px;top:4.95px" width="7" height="9"><path d="M1.6 1.1L5.3 4.3L1.6 7.5" stroke="#2f2f2f" stroke-width="1.75" fill="none"/></svg></div>
  <div class="row" style="left:104px;top:19.8px;width:27.4px;height:18.5px;"><span class="lbl" style="right:1.5px;line-height:18.5px;">view</span></div>
  <div class="auto" style="right:4px;top:64px;">AUTO</div>
</div>

<div class="node" style="left:453px;top:161px;width:102px;height:38.9px;">
  <div class="hd" style="height:19.6px;line-height:19.6px;">String</div>
  <div class="tb" style="left:1px;top:20.2px;width:85.79999999999995px;height:17.6px;line-height:17.6px;"><span style="position:absolute;left:3.3px;top:1.2px;letter-spacing:-0.44px">GF-LOBBY&amp;INFANT</span></div>
  <div class="btn" style="left:87.79999999999995px;top:20.2px;width:13.200000000000045px;height:17.6px;line-height:17.6px;"><span style="position:relative;top:1.3px">&gt;</span></div>
</div>
<div class="node" style="left:452px;top:212px;width:101px;height:38.9px;">
  <div class="hd" style="height:19.6px;line-height:19.6px;">String</div>
  <div class="tb" style="left:1px;top:20.2px;width:85.0px;height:17.6px;line-height:17.6px;"><span style="position:absolute;left:3.3px;top:1.2px;letter-spacing:-0.65px">FF-KIDS PLAY AREA</span></div>
  <div class="btn" style="left:87.0px;top:20.2px;width:13.0px;height:17.6px;line-height:17.6px;"><span style="position:relative;top:1.3px">&gt;</span></div>
</div>
<div class="node" style="left:456px;top:287px;width:44px;height:38.9px;">
  <div class="hd" style="height:19.6px;line-height:19.6px;">String</div>
  <div class="tb" style="left:1px;top:20.2px;width:28.19999999999999px;height:17.6px;line-height:17.6px;"><span style="position:absolute;left:3.3px;top:1.2px;letter-spacing:0px">B1</span></div>
  <div class="btn" style="left:30.19999999999999px;top:20.2px;width:12.800000000000011px;height:17.6px;line-height:17.6px;"><span style="position:relative;top:1.3px">&gt;</span></div>
</div>
<div class="node" style="left:455px;top:331px;width:44px;height:38.9px;">
  <div class="hd" style="height:19.6px;line-height:19.6px;">String</div>
  <div class="tb" style="left:1px;top:20.2px;width:28.19999999999999px;height:17.6px;line-height:17.6px;"><span style="position:absolute;left:3.3px;top:1.2px;letter-spacing:0px">B4</span></div>
  <div class="btn" style="left:30.19999999999999px;top:20.2px;width:12.800000000000011px;height:17.6px;line-height:17.6px;"><span style="position:relative;top:1.3px">&gt;</span></div>
</div>
<div class="node" style="left:452px;top:393px;width:43.5px;height:38.9px;">
  <div class="hd" style="height:19.6px;line-height:19.6px;">String</div>
  <div class="tb" style="left:1px;top:20.2px;width:28.19999999999999px;height:17.6px;line-height:17.6px;"><span style="position:absolute;left:3.3px;top:1.2px;letter-spacing:0px">01</span></div>
  <div class="btn" style="left:30.19999999999999px;top:20.2px;width:12.300000000000011px;height:17.6px;line-height:17.6px;"><span style="position:relative;top:1.3px">&gt;</span></div>
</div>
<div class="node" style="left:452px;top:444px;width:43.5px;height:38.9px;">
  <div class="hd" style="height:19.6px;line-height:19.6px;">String</div>
  <div class="tb" style="left:1px;top:20.2px;width:28.19999999999999px;height:17.6px;line-height:17.6px;"><span style="position:absolute;left:3.3px;top:1.2px;letter-spacing:0px">02</span></div>
  <div class="btn" style="left:30.19999999999999px;top:20.2px;width:12.300000000000011px;height:17.6px;line-height:17.6px;"><span style="position:relative;top:1.3px">&gt;</span></div>
</div>
<div class="node" style="left:450px;top:522.5px;width:44px;height:38.9px;">
  <div class="hd" style="height:19.6px;line-height:19.6px;">String</div>
  <div class="tb" style="left:1px;top:20.2px;width:28.19999999999999px;height:17.6px;line-height:17.6px;"><span style="position:absolute;left:3.3px;top:1.2px;letter-spacing:0px">00</span></div>
  <div class="btn" style="left:30.19999999999999px;top:20.2px;width:12.800000000000011px;height:17.6px;line-height:17.6px;"><span style="position:relative;top:1.3px">&gt;</span></div>
</div>
<div class="node" style="left:449px;top:571.5px;width:44px;height:38.9px;">
  <div class="hd" style="height:19.6px;line-height:19.6px;">String</div>
  <div class="tb" style="left:1px;top:20.2px;width:28.19999999999999px;height:17.6px;line-height:17.6px;"><span style="position:absolute;left:3.3px;top:1.2px;letter-spacing:0px">01</span></div>
  <div class="btn" style="left:30.19999999999999px;top:20.2px;width:12.800000000000011px;height:17.6px;line-height:17.6px;"><span style="position:relative;top:1.3px">&gt;</span></div>
</div>

</body></html>
